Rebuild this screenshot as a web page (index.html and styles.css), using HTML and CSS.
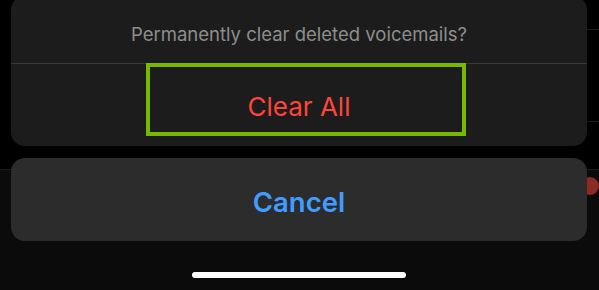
FILE: index.html
```html
<!DOCTYPE html>
<html lang="en">
<head>
<meta charset="UTF-8">
<meta name="viewport" content="width=device-width, initial-scale=1.0">
<title>Clear Voicemails</title>
<link rel="stylesheet" href="styles.css">
</head>
<body>
<div class="backdrop">
  <div class="row row-top"></div>
  <div class="row row-mid"></div>
  <div class="row row-gap"></div>
  <div class="row row-low"><span class="badge"></span></div>
</div>

<div class="sheet">
  <div class="card card-actions">
    <div class="title">Permanently clear deleted voicemails?</div>
    <div class="action destructive">Clear All</div>
    <div class="highlight"></div>
  </div>
  <div class="card card-cancel">
    <div class="action cancel">Cancel</div>
  </div>
</div>

<div class="home-indicator"></div>
</body>
</html>
```

FILE: styles.css
```css
body {
  margin: 0;
  padding: 0;
  width: 599px;
  height: 290px;
  overflow: hidden;
  background-color: #000000;
  font-family: Inter, "Liberation Sans", Arial, sans-serif;
  position: relative;
}

/* list rows sitting behind the action sheet */
.backdrop {
  display: flex;
  flex-direction: column;
  height: 100%;
}

.row {
  border-bottom: 1px solid #1c1c1c;
}

.row-top {
  height: 29px;
  margin-left: 20px; /* inset separators */
}

.row-mid {
  height: 91px;
  margin-left: 20px;
}

.row-gap {
  height: 47px;
}

.row-low {
  flex: 1;
  background-color: #0b0b0b;
  border-bottom: none;
  position: relative;
}

.badge {
  position: absolute;
  top: 7px;
  left: 581px;
  width: 18px;
  height: 18px;
  border-radius: 50%;
  background-color: #8e2a23;
}

.sheet {
  position: absolute;
  top: -4px;
  left: 11px;
  width: 576px;
  display: flex;
  flex-direction: column;
  gap: 12px;
}

.card {
  border-radius: 14px;
  position: relative;
}

.card-actions {
  background-color: #1c1c1c;
}

.card-cancel {
  background-color: #2c2c2c;
}

.title {
  height: 68px;
  box-sizing: border-box;
  padding-top: 8px;
  display: flex;
  justify-content: center;
  align-items: center;
  color: #8e8e8e;
  font-size: 18.5px;
  border-bottom: 1px solid #3a3a3a;
}

.action {
  display: flex;
  justify-content: center;
  align-items: center;
}

.destructive {
  height: 82px;
  padding-top: 2px;
  box-sizing: border-box;
  color: #ff453a;
  font-size: 26px;
}

.cancel {
  height: 83px;
  padding-top: 4px;
  box-sizing: border-box;
  color: #409cff;
  font-size: 27.5px;
  font-weight: 600;
}

/* green annotation box round the Clear All button */
.highlight {
  position: absolute;
  left: 135px;
  top: 67px;
  width: 320px;
  height: 73px;
  box-sizing: border-box;
  border: 4px solid #76b900;
}

.home-indicator {
  position: absolute;
  left: 192px;
  top: 272px;
  width: 214px;
  height: 6px;
  border-radius: 3px;
  background-color: #ffffff;
}
```
